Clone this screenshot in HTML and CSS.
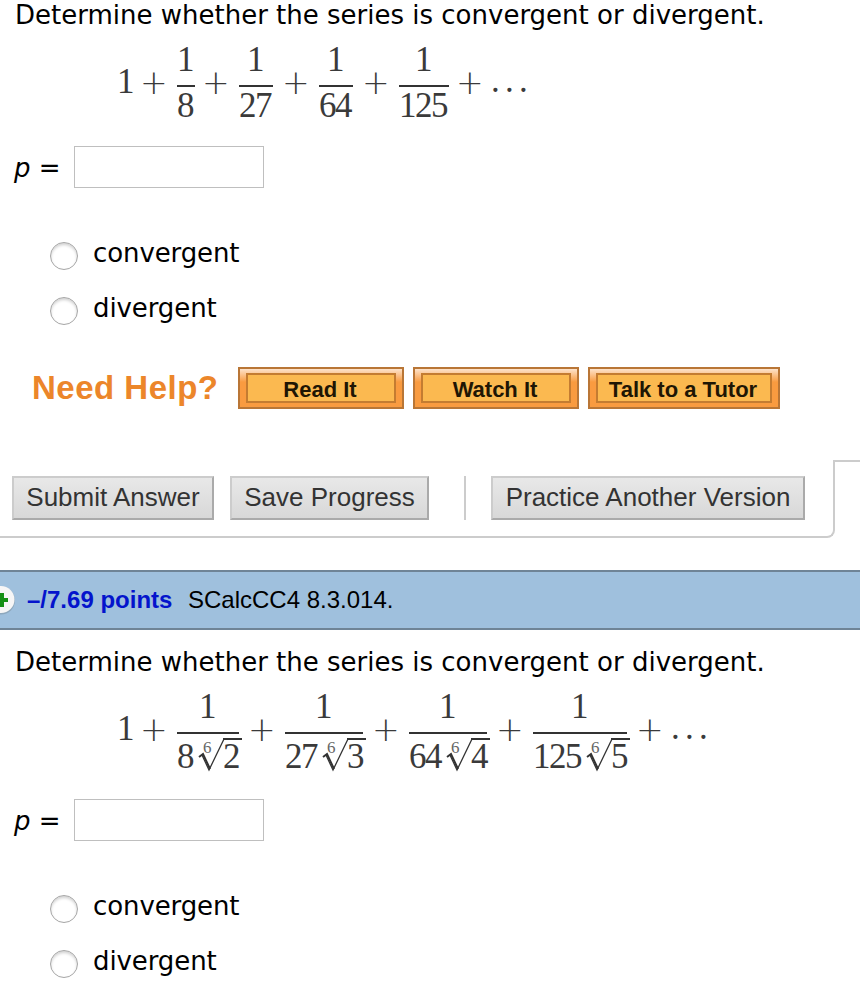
FILE: index.html
```html
<!DOCTYPE html>
<html lang="en">
<head>
  <meta charset="UTF-8">
  <meta name="viewport" content="width=device-width, initial-scale=1.0">
  <title>Homework</title>
  <link rel="stylesheet" href="styles.css">
</head>
<body>
  <!-- First question -->
  <section class="question">
    <p class="prompt">Determine whether the series is convergent or divergent.</p>
    <div class="formula">
      <span class="num">1</span><span class="op">+</span>
      <span class="frac"><span class="top">1</span><span class="bottom">8</span></span><span class="op tight">+</span>
      <span class="frac"><span class="top">1</span><span class="bottom">27</span></span><span class="op">+</span>
      <span class="frac"><span class="top">1</span><span class="bottom">64</span></span><span class="op">+</span>
      <span class="frac"><span class="top">1</span><span class="bottom">125</span></span><span class="op tight">+</span>
      <span class="dots">...</span>
    </div>
    <div class="answer">
      <label for="p1"><i>p</i> =</label>
      <input type="text" id="p1">
    </div>
    <div class="choices">
      <label class="choice"><input type="radio" name="q1"><span>convergent</span></label>
      <label class="choice"><input type="radio" name="q1"><span>divergent</span></label>
    </div>
  </section>

  <div class="help">
    <span class="help-title">Need Help?</span>
    <button class="help-btn"><span>Read It</span></button>
    <button class="help-btn"><span>Watch It</span></button>
    <button class="help-btn wide"><span>Talk to a Tutor</span></button>
  </div>

  <div class="actions-row">
    <div class="actions">
      <button class="btn submit">Submit Answer</button>
      <button class="btn save">Save Progress</button>
      <span class="divider"></span>
      <button class="btn practice">Practice Another Version</button>
    </div>
    <div class="actions-edge"></div>
  </div>

  <!-- Second question -->
  <header class="question-header">
    <svg class="expand" width="16" height="30" viewBox="0 0 16 30">
      <circle cx="1" cy="15.5" r="14" fill="#7f93a3" opacity=".55"/>
      <circle cx="1" cy="14.5" r="13.5" fill="#f6f6f6"/>
      <path d="M0 8h4v5h4v4H4v5H0z" fill="#159015"/>
    </svg>
    <span class="points">–/7.69 points</span>
    <span class="source">SCalcCC4 8.3.014.</span>
  </header>

  <section class="question second">
    <p class="prompt">Determine whether the series is convergent or divergent.</p>
    <div class="formula">
      <span class="num">1</span><span class="op">+</span>
      <span class="frac"><span class="top">1</span><span class="bottom">8<span class="root"><sup>6</sup><svg width="45" height="36" viewBox="0 0 45 36"><path d="M1 20l4-3 7 15" fill="none" stroke="#333" stroke-width="2"/><path d="M4 18l7 15L26 2" fill="none" stroke="#333" stroke-width="1.3"/><path d="M25 2h19" stroke="#333" stroke-width="2"/></svg><span>2</span></span></span></span><span class="op">+</span>
      <span class="frac"><span class="top">1</span><span class="bottom">27<span class="root"><sup>6</sup><svg width="45" height="36" viewBox="0 0 45 36"><path d="M1 20l4-3 7 15" fill="none" stroke="#333" stroke-width="2"/><path d="M4 18l7 15L26 2" fill="none" stroke="#333" stroke-width="1.3"/><path d="M25 2h19" stroke="#333" stroke-width="2"/></svg><span>3</span></span></span></span><span class="op">+</span>
      <span class="frac"><span class="top">1</span><span class="bottom">64<span class="root"><sup>6</sup><svg width="45" height="36" viewBox="0 0 45 36"><path d="M1 20l4-3 7 15" fill="none" stroke="#333" stroke-width="2"/><path d="M4 18l7 15L26 2" fill="none" stroke="#333" stroke-width="1.3"/><path d="M25 2h19" stroke="#333" stroke-width="2"/></svg><span>4</span></span></span></span><span class="op">+</span>
      <span class="frac"><span class="top">1</span><span class="bottom">125<span class="root"><sup>6</sup><svg width="45" height="36" viewBox="0 0 45 36"><path d="M1 20l4-3 7 15" fill="none" stroke="#333" stroke-width="2"/><path d="M4 18l7 15L26 2" fill="none" stroke="#333" stroke-width="1.3"/><path d="M25 2h19" stroke="#333" stroke-width="2"/></svg><span>5</span></span></span></span><span class="op">+</span>
      <span class="dots">...</span>
    </div>
    <div class="answer">
      <label for="p2"><i>p</i> =</label>
      <input type="text" id="p2">
    </div>
    <div class="choices">
      <label class="choice"><input type="radio" name="q2"><span>convergent</span></label>
      <label class="choice"><input type="radio" name="q2"><span>divergent</span></label>
    </div>
  </section>
</body>
</html>
```
FILE: styles.css
```css
* {
  box-sizing: border-box;
}
body {
  margin: 0;
  background: #fff;
  color: #000;
  font-family: Verdana, "DejaVu Sans", sans-serif;
  font-size: 26px;
  line-height: 30px;
  overflow: hidden;
}
.prompt {
  margin: 0;
  padding-left: 15px;
  white-space: nowrap;
}

/* Series */
.formula {
  display: flex;
  align-items: flex-start;
  height: 106px;
  padding: 10px 0 0 117px;
  font-family: "Liberation Serif", serif;
  font-size: 35px;
  line-height: 39px;
  letter-spacing: -1.5px;
  color: #3a3a3a;
}
.num {
  width: 16px;
  padding-top: 22px;
}
.op {
  width: 22px;
  margin: 24px 12px 0 10px;
  font-family: "DejaVu Sans", sans-serif;
  font-weight: 200;
  font-size: 33px;
  line-height: 38px;
  letter-spacing: 0;
  text-indent: -3px;
}
.frac {
  display: flex;
  flex-direction: column;
}
.frac + .op {
  margin-left: 12px;
}
.frac + .op.tight {
  margin-left: 10px;
}
.top {
  height: 45px;
  padding-right: 2px;
  text-align: center;
}
.bottom {
  display: flex;
  height: 42px;
  padding: 0 2px 0 0;
  border-top: 2px solid #333;
  line-height: 37px;
}
.root {
  display: flex;
  position: relative;
  width: 42px;
  margin-left: 4px;
  padding-left: 26px;
}
.root svg {
  position: absolute;
  left: 1px;
  top: 3px;
}
.root sup {
  position: absolute;
  left: 6px;
  top: 4px;
  color: #666;
  font-size: 17px;
  line-height: 19px;
}
.second .bottom {
  padding-right: 0;
  line-height: 46px;
}
.dots {
  padding-top: 21px;
  margin-left: -2px;
  letter-spacing: 5.3px;
}

/* Answer */
.answer {
  display: flex;
  align-items: center;
  height: 62px;
  padding-left: 14px;
}
.answer label {
  width: 60px;
  padding-top: 1px;
  white-space: nowrap;
}
.answer input {
  width: 190px;
  height: 42px;
  margin: 0;
  border: 1px solid #bfbfbf;
  background: #fff;
}
.choices {
  padding: 40px 0 0 50px;
}
.choice {
  display: flex;
  height: 55px;
  letter-spacing: -0.1px;
}
.choice input {
  appearance: none;
  width: 28px;
  height: 28px;
  margin: 4px 15px 0 0;
  border: 1px solid #a6a6a6;
  border-radius: 50%;
  background: #fff;
  box-shadow: inset 0 2px 3px rgba(0, 0, 0, 0.18);
}
.second .answer {
  margin-top: 6px;
}

/* Need Help */
.help {
  display: flex;
  gap: 9px;
  height: 112px;
  padding: 19px 0 0 32px;
  font-family: Arial, "Liberation Sans", sans-serif;
  font-weight: bold;
}
.help-title {
  width: 197px;
  color: #ec862a;
  font-size: 33px;
  line-height: 42px;
  letter-spacing: 0.5px;
  white-space: nowrap;
}
.help-btn {
  width: 166px;
  height: 42px;
  padding: 4px 6px;
  border: 2px solid #b97636;
  background: linear-gradient(#fde3cb, #f99b40 13px);
}
.help-btn.wide {
  width: 192px;
}
.help-btn span {
  display: block;
  height: 30px;
  border: 2px solid #c47c31;
  background: #fbb950;
  color: #1f1604;
  font: bold 22px/29px Arial, "Liberation Sans", sans-serif;
  text-indent: -2px;
  white-space: nowrap;
}

/* Submit panel */
.actions-row {
  display: flex;
}
.actions {
  display: flex;
  width: 835px;
  height: 78px;
  padding: 16px 0 0 12px;
  border: solid #ccc;
  border-width: 0 2px 2px 0;
  border-bottom-right-radius: 8px;
}
.actions-edge {
  flex: 1;
  height: 2px;
  background: #ccc;
}
.btn {
  height: 44px;
  padding: 0 0 2px;
  border: 2px solid;
  border-color: #ccc #aaa #aaa #ccc;
  background: linear-gradient(#e8e8e8, #d8d8d8);
  color: #333;
  font: 26px/38px Arial, "Liberation Sans", sans-serif;
  white-space: nowrap;
}
.submit {
  width: 202px;
  margin-right: 16px;
}
.save {
  width: 199px;
}
.divider {
  width: 2px;
  height: 44px;
  margin: 0 25px 0 35px;
  background: #ccc;
}
.practice {
  width: 314px;
}

/* Question header */
.question-header {
  display: flex;
  align-items: center;
  height: 60px;
  margin: 32px 0 17px;
  border: solid #6f8496;
  border-width: 2px 0;
  background: #9fc0dd;
  font: 24px/28px Arial, "Liberation Sans", sans-serif;
}
.points {
  width: 161px;
  margin-left: 11px;
  color: #0414cc;
  font-weight: bold;
}
```
